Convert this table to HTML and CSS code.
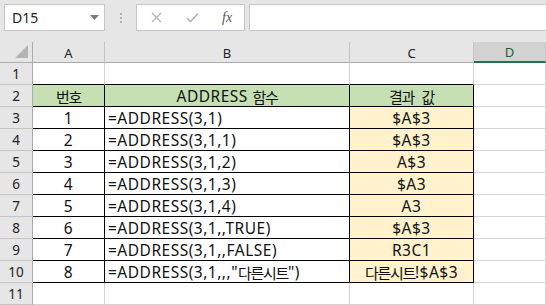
FILE: index.html
```html
<!DOCTYPE html>
<html>
<head>
  <title>ADDRESS 함수</title>
  <link rel="stylesheet" href="styles.css">
</head>
<body>
  <div class="app">
    <div class="toolbar">
      <div class="name-box">
        <span>D15</span>
        <svg class="drop" width="9" height="5" viewBox="0 0 9 5"><path d="M0 0H9L4.5 5Z" fill="#7a7a7a"/></svg>
      </div>
      <div class="grip"><i></i><i></i><i></i></div>
      <div class="fx-box">
        <svg width="11" height="11" viewBox="0 0 11 11"><path d="M1 1L10 10M10 1L1 10" stroke="#b4b4b4" stroke-width="1.3" fill="none"/></svg>
        <svg width="13" height="11" viewBox="0 0 13 11"><path d="M1 6L4.5 9.5L12 1.5" stroke="#b4b4b4" stroke-width="1.6" fill="none"/></svg>
        <span class="fx">fx</span>
      </div>
      <div class="formula"></div>
    </div>

    <div class="sheet">
      <div class="corner"><span class="tri"></span></div>
      <div class="col-head">A</div>
      <div class="col-head">B</div>
      <div class="col-head">C</div>
      <div class="col-head active">D</div>

      <div class="row-head">1</div>
      <div class="cell top-edge"></div>
      <div class="cell top-edge"></div>
      <div class="cell top-edge"></div>
      <div class="cell"></div>

      <div class="row-head">2</div>
      <div class="cell box head center"><span class="ko">번호</span></div>
      <div class="cell box head center">ADDRESS&nbsp;<span class="ko">함수</span></div>
      <div class="cell box head center"><span class="ko">결과 값</span></div>
      <div class="cell"></div>

      <div class="row-head">3</div>
      <div class="cell box center">1</div>
      <div class="cell box">=ADDRESS(3,1)</div>
      <div class="cell box result center">$A$3</div>
      <div class="cell"></div>

      <div class="row-head">4</div>
      <div class="cell box center">2</div>
      <div class="cell box">=ADDRESS(3,1,1)</div>
      <div class="cell box result center">$A$3</div>
      <div class="cell"></div>

      <div class="row-head">5</div>
      <div class="cell box center">3</div>
      <div class="cell box">=ADDRESS(3,1,2)</div>
      <div class="cell box result center">A$3</div>
      <div class="cell"></div>

      <div class="row-head">6</div>
      <div class="cell box center">4</div>
      <div class="cell box">=ADDRESS(3,1,3)</div>
      <div class="cell box result center">$A3</div>
      <div class="cell"></div>

      <div class="row-head">7</div>
      <div class="cell box center">5</div>
      <div class="cell box">=ADDRESS(3,1,4)</div>
      <div class="cell box result center">A3</div>
      <div class="cell"></div>

      <div class="row-head">8</div>
      <div class="cell box center">6</div>
      <div class="cell box">=ADDRESS(3,1,,TRUE)</div>
      <div class="cell box result center">$A$3</div>
      <div class="cell"></div>

      <div class="row-head">9</div>
      <div class="cell box center">7</div>
      <div class="cell box">=ADDRESS(3,1,,FALSE)</div>
      <div class="cell box result center">R3C1</div>
      <div class="cell"></div>

      <div class="row-head">10</div>
      <div class="cell box center">8</div>
      <div class="cell box">=ADDRESS(3,1,,,"<span class="ko">다른시트</span>")</div>
      <div class="cell box result center"><span class="ko">다른시트</span>!$A$3</div>
      <div class="cell"></div>

      <div class="row-head">11</div>
      <div class="cell"></div>
      <div class="cell"></div>
      <div class="cell"></div>
      <div class="cell"></div>
    </div>
  </div>
</body>
</html>
```

FILE: styles.css
```css
* {
  box-sizing: border-box;
}

body {
  margin: 0;
  font-family: "Noto Sans", "Noto Sans CJK KR", sans-serif;
  background-color: #fff;
  overflow: hidden;
}

.app {
  width: 546px;
  height: 305px;
  background-color: #e6e6e6;
}

/* top bar: name box + formula bar */
.toolbar {
  display: flex;
  align-items: flex-start;
  height: 42px;
  padding: 4px 0 0 4px;
}

.name-box {
  display: flex;
  align-items: center;
  justify-content: space-between;
  width: 101px;
  height: 27px;
  padding: 0 5px 0 7px;
  background-color: #fff;
  border: 1px solid #c6c6c6;
  font-size: 14px;
  color: #222;
}

.grip {
  display: flex;
  flex-direction: column;
  gap: 2px;
  width: 31px;
  height: 27px;
  align-items: center;
  justify-content: center;
}

.grip i {
  width: 2px;
  height: 2px;
  background-color: #b0b0b0;
}

.fx-box {
  display: flex;
  align-items: center;
  width: 109px;
  height: 27px;
  padding: 0 0 0 14px;
  gap: 24px;
  background-color: #fff;
  border: 1px solid #c6c6c6;
}

.fx {
  font-family: "Liberation Serif", serif;
  font-style: italic;
  font-size: 14px;
  color: #555;
  margin-left: -1px;
}

.formula {
  flex: 1;
  height: 27px;
  margin-left: 4px;
  margin-right: -2px;
  background-color: #fff;
  border: 1px solid #c6c6c6;
}

/* grid */
.sheet {
  display: grid;
  grid-template-columns: 33px 72px 245px 124px 1fr;
  grid-template-rows: 21px repeat(11, 22px);
  background-color: #fff;
}

.corner {
  position: relative;
  background-color: #e6e6e6;
  border-right: 1px solid #ababab;
  border-bottom: 1px solid #ababab;
}

.corner .tri {
  position: absolute;
  right: 4px;
  bottom: 4px;
  width: 0;
  height: 0;
  border-left: 13px solid transparent;
  border-bottom: 13px solid #b4b4b4;
}

.col-head {
  display: flex;
  align-items: center;
  justify-content: center;
  padding-top: 1px;
  background-color: #e6e6e6;
  border-right: 1px solid #c4c4c4;
  border-bottom: 1px solid #ababab;
  font-size: 13px;
  color: #222;
}

.col-head.active {
  background-color: #d2d2d2;
  border-bottom: 2px solid #217346;
  color: #1f5c3a;
}

.row-head {
  display: flex;
  align-items: center;
  justify-content: center;
  background-color: #e6e6e6;
  border-right: 1px solid #ababab;
  border-bottom: 1px solid #c4c4c4;
  font-size: 13.5px;
  color: #222;
}

.cell {
  display: flex;
  align-items: center;
  padding: 1px 3px 0;
  border-right: 1px solid #d4d4d4;
  border-bottom: 1px solid #d4d4d4;
  font-size: 15.5px;
  letter-spacing: 0.5px;
  color: #111;
  white-space: nowrap;
}

/* hangul set tighter than the latin text */
.cell .ko {
  font-size: 15px;
  letter-spacing: -1.3px;
  word-spacing: 5px;
  white-space: pre;
}

.cell.top-edge {
  border-bottom-color: #000;
}

.cell.box {
  border-right-color: #000;
  border-bottom-color: #000;
}

.cell.center {
  justify-content: center;
}

.cell.head {
  background-color: #c6e0b4;
}

.cell.result {
  background-color: #fff2cc;
}
```
